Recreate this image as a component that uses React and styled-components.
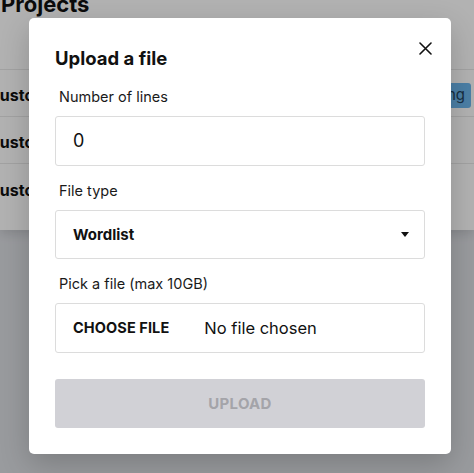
import React from "react";
import styled, { createGlobalStyle } from "styled-components";

const GlobalStyle = createGlobalStyle`
  html, body {
    margin: 0;
    padding: 0;
    background: #dcdee3;
    font-family: Inter, "Noto Sans", "Liberation Sans", sans-serif;
    color: #111;
  }
`

const Page = styled.div`
  width: 474px;
  height: 473px;
  overflow: hidden;
  position: relative;
`

const Card = styled.div`
  background: #fff;
  height: 237px;
  margin-top: -7px;
  box-shadow: 0 4px 10px rgba(0, 0, 0, 0.12);
`

const Heading = styled.h1`
  margin: 0;
  padding: 0 0 0 1px;
  height: 77px;
  font-size: 22px;
  font-weight: 700;
  line-height: 22px;
  border-bottom: 1px solid #e8e8e8;
  box-sizing: border-box;
`

const Row = styled.div`
  display: flex;
  align-items: center;
  justify-content: space-between;
  height: 47px;
  padding-top: 4px;
  box-sizing: border-box;
  border-bottom: ${p => (p.last ? "none" : "1px solid #e8e8e8")};
  margin-left: -12px;
`

const RowName = styled.span`
  font-size: 16px;
  font-weight: 700;
`

const Badge = styled.span`
  background: #6cb6ee;
  color: #23445c;
  font-size: 15px;
  padding: 2px 6px 4px 14px;
  border-radius: 3px;
  margin-right: 3px;
`

const Overlay = styled.div`
  position: absolute;
  inset: 0;
  background: rgba(0, 0, 0, 0.3);
  padding: 18px 0 0 29px;
`

const Modal = styled.div`
  position: relative;
  width: 422px;
  height: 436px;
  box-sizing: border-box;
  background: #fff;
  border-radius: 5px;
  padding: 28px 26px 26px;
  display: flex;
  flex-direction: column;
  box-shadow: 0 10px 30px rgba(0, 0, 0, 0.2);
`

const Close = styled.button`
  position: absolute;
  top: 18px;
  right: 14px;
  width: 24px;
  height: 24px;
  padding: 0;
  border: none;
  background: none;
  display: flex;
  align-items: center;
  justify-content: center;
  cursor: pointer;
`

const Title = styled.h2`
  margin: 0 0 18px;
  font-size: 18.5px;
  line-height: 24px;
  font-weight: 700;
`

const Label = styled.label`
  display: block;
  font-size: 14.5px;
  line-height: 18px;
  padding-left: 4px;
  margin-bottom: 10px;
  color: #1a1a1a;
`

const Field = styled.div`
  height: 50px;
  box-sizing: border-box;
  border: 1px solid #dcdcdc;
  border-radius: 3px;
  display: flex;
  align-items: center;
  padding: 0 18px 0 17px;
  margin-bottom: ${p => p.gap || 16}px;
`

const Value = styled.span`
  font-size: ${p => p.size || 17}px;
  font-weight: ${p => (p.bold ? 700 : 400)};
  flex: ${p => (p.grow ? 1 : "none")};
  color: #111;
`

const Caret = styled.span`
  width: 0;
  height: 0;
  border-left: 4.5px solid transparent;
  border-right: 4.5px solid transparent;
  border-top: 5px solid #111;
  margin-right: -3px;
`

const ChooseButton = styled.span`
  font-size: 14.5px;
  font-weight: 700;
  letter-spacing: 0.1px;
  margin-right: 35px;
`

const UploadButton = styled.button`
  height: 50px;
  border: none;
  border-radius: 3px;
  background: #d1d1d6;
  color: #a4a4a9;
  font-family: inherit;
  font-size: 15px;
  font-weight: 700;
  letter-spacing: 0.3px;
`

const rows = ["Custom wordlist", "Custom wordlist", "Custom wordlist"]

export default function App() {
  return (
    <>
      <GlobalStyle />
      <Page>
        <Card>
          <Heading>Projects</Heading>
          {rows.map((r, i) => (
            <Row key={i} last={i === rows.length - 1}>
              <RowName>{r}</RowName>
              {i === 0 && <Badge>Running</Badge>}
            </Row>
          ))}
        </Card>
        <Overlay>
          <Modal>
            <Close aria-label="Close">
              <svg width="13" height="13" viewBox="0 0 13 13">
                <path d="M1 1L12 12M12 1L1 12" stroke="#111" strokeWidth="1.6" strokeLinecap="round" />
              </svg>
            </Close>
            <Title>Upload a file</Title>
            <Label>Number of lines</Label>
            <Field>
              <Value size={18}>0</Value>
            </Field>
            <Label>File type</Label>
            <Field>
              <Value bold size={15} grow>Wordlist</Value>
              <Caret />
            </Field>
            <Label>Pick a file (max 10GB)</Label>
            <Field gap={26}>
              <ChooseButton>CHOOSE FILE</ChooseButton>
              <Value size={16.5}>No file chosen</Value>
            </Field>
            <UploadButton disabled>UPLOAD</UploadButton>
          </Modal>
        </Overlay>
      </Page>
    </>
  )
}
